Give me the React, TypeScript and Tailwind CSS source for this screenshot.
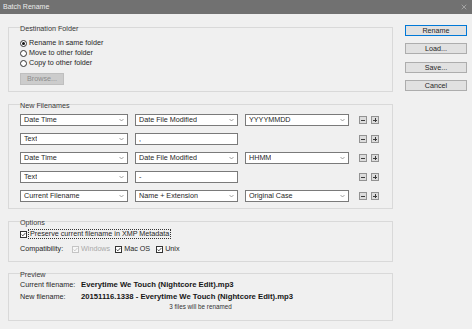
import { X } from 'lucide-react'

const font = { fontFamily: '"Liberation Sans", Arial, sans-serif' }

const rows = [
  { a: 'Date Time', b: 'Date File Modified', bSelect: true, c: 'YYYYMMDD' },
  { a: 'Text', b: ',', bSelect: false, c: null },
  { a: 'Date Time', b: 'Date File Modified', bSelect: true, c: 'HHMM' },
  { a: 'Text', b: '-', bSelect: false, c: null },
  { a: 'Current Filename', b: 'Name + Extension', bSelect: true, c: 'Original Case' },
]

function Chevron() {
  return (
    <svg width="5" height="4" viewBox="0 0 5 4" className="shrink-0">
      <polyline points="0.5,1 2.5,3 4.5,1" fill="none" stroke="#7a7a7a" strokeWidth="0.7" />
    </svg>
  )
}

function Select({ label, width }: { label: string; width: string }) {
  return (
    <div className={`${width} h-[12px] bg-white border border-[#7a7a7a] flex items-center justify-between pl-[3px] pr-[3px]`}>
      <span className="truncate">{label}</span>
      <Chevron />
    </div>
  )
}

function TextBox({ value, width }: { value: string; width: string }) {
  return (
    <div className={`${width} h-[12px] bg-white border border-[#7a7a7a] flex items-center pl-[3px]`}>
      <span>{value}</span>
    </div>
  )
}

function SmallBtn({ plus }: { plus?: boolean }) {
  return (
    <div className="w-[8px] h-[8px] bg-[#dcdcdc] border border-[#929292] flex items-center justify-center relative">
      <div className="w-[4px] h-[1px] bg-[#3a3a3a]" />
      {plus && <div className="absolute w-[1px] h-[4px] bg-[#3a3a3a]" />}
    </div>
  )
}

function Check({ disabled }: { disabled?: boolean }) {
  return (
    <div
      className={
        disabled
          ? 'w-[7px] h-[7px] bg-[#f7f7f7] border border-[#c4c4c4] flex items-center justify-center shrink-0'
          : 'w-[7px] h-[7px] bg-white border border-[#333] flex items-center justify-center shrink-0'
      }
    >
      <svg width="5" height="5" viewBox="0 0 5 5">
        <polyline points="0.6,2.6 1.9,3.8 4.4,1" fill="none" stroke={disabled ? '#bdbdbd' : '#222'} strokeWidth="0.8" />
      </svg>
    </div>
  )
}

function Radio({ checked, label }: { checked?: boolean; label: string }) {
  return (
    <div className="h-[10px] flex items-center gap-[2px]">
      <div className="w-[7px] h-[7px] rounded-full border border-[#333] bg-white flex items-center justify-center">
        {checked && <div className="w-[3px] h-[3px] rounded-full bg-[#111]" />}
      </div>
      <span>{label}</span>
    </div>
  )
}

function GroupLabel({ children }: { children: React.ReactNode }) {
  return <div className="-mt-[3px] ml-[11px] h-[8px] leading-[8px] text-[#3a3a3a]">{children}</div>
}

export default function App() {
  return (
    <div className="w-[474px] h-[331px] bg-white overflow-hidden text-[7.2px] leading-[8px] text-[#262626]" style={font}>
      <div className="w-[472px] h-[329px] bg-[#f0f0f0] flex flex-col">
        {/* Title bar */}
        <div className="h-[14px] bg-[#717171] text-[#ececec] text-[7px] flex items-center justify-between pl-[3px] pr-[4px]">
          <span>Batch Rename</span>
          <X className="w-[8px] h-[8px] text-[#e6e6e6]" strokeWidth={1.3} />
        </div>

        <div className="flex pl-[8px]">
          {/* Left column */}
          <div className="w-[385px] flex flex-col">
            {/* Destination Folder */}
            <div className="mt-[13px] h-[65px] border border-[#d9d9d9]">
              <GroupLabel>Destination Folder</GroupLabel>
              <div className="pl-[11px] mt-[5px] flex flex-col">
                <Radio checked label="Rename in same folder" />
                <Radio label="Move to other folder" />
                <Radio label="Copy to other folder" />
                <div className="mt-[5px] w-[44px] h-[12px] bg-[#cccccc] border border-[#bfbfbf] text-[#8c8c8c] flex items-center justify-center">
                  Browse...
                </div>
              </div>
            </div>

            {/* New Filenames */}
            <div className="mt-[12px] h-[105px] border border-[#d9d9d9]">
              <GroupLabel>New Filenames</GroupLabel>
              <div className="pl-[11px] mt-[4px] flex flex-col gap-[7px]">
                {rows.map((r, i) => (
                  <div key={i} className="flex items-center">
                    <Select label={r.a} width="w-[108px]" />
                    <div className="ml-[7px]">
                      {r.bSelect ? <Select label={r.b} width="w-[103px]" /> : <TextBox value={r.b} width="w-[103px]" />}
                    </div>
                    <div className="ml-[7px] w-[104px]">
                      {r.c && <Select label={r.c} width="w-[104px]" />}
                    </div>
                    <div className="ml-[10px] flex items-center gap-[4px]">
                      <SmallBtn />
                      <SmallBtn plus />
                    </div>
                  </div>
                ))}
              </div>
            </div>

            {/* Options */}
            <div className="mt-[12px] h-[41px] border border-[#d9d9d9]">
              <GroupLabel>Options</GroupLabel>
              <div className="pl-[11px] flex flex-col">
                <div className="mt-[2px] h-[10px] flex items-center gap-[1px]">
                  <Check />
                  <span className="border border-dotted border-[#333] px-[1px] leading-[8px]">
                    Preserve current filename in XMP Metadata
                  </span>
                </div>
                <div className="mt-[5px] h-[10px] flex items-center">
                  <span className="w-[52px] shrink-0">Compatibility:</span>
                  <div className="flex items-center gap-[2px] text-[#a9a9a9]">
                    <Check disabled />
                    <span>Windows</span>
                  </div>
                  <div className="ml-[5px] flex items-center gap-[2px]">
                    <Check />
                    <span>Mac OS</span>
                  </div>
                  <div className="ml-[6px] flex items-center gap-[2px]">
                    <Check />
                    <span>Unix</span>
                  </div>
                </div>
              </div>
            </div>

            {/* Preview */}
            <div className="mt-[11px] h-[48px] border border-[#d9d9d9]">
              <GroupLabel>Preview</GroupLabel>
              <div className="pl-[11px] flex flex-col">
                <div className="mt-[1px] h-[10px] flex items-center">
                  <span className="w-[61px] shrink-0">Current filename:</span>
                  <span className="font-bold text-[7.7px] text-[#161616]">Everytime We Touch (Nightcore Edit).mp3</span>
                </div>
                <div className="mt-[2px] h-[10px] flex items-center">
                  <span className="w-[61px] shrink-0">New filename:</span>
                  <span className="font-bold text-[7.7px] text-[#161616]">
                    20151116.1338 - Everytime We Touch (Nightcore Edit).mp3
                  </span>
                </div>
                <div className="h-[9px] flex items-center justify-center pr-[11px] text-[6.3px] text-[#333]">
                  3 files will be renamed
                </div>
              </div>
            </div>
          </div>

          {/* Right buttons */}
          <div className="ml-[12px] w-[62px] pt-[11px] flex flex-col">
            <div className="h-[11px] bg-[#e1e1e1] border border-[#0078d7] flex items-center justify-center">Rename</div>
            <div className="mt-[7px] h-[11px] bg-[#e1e1e1] border border-[#adadad] flex items-center justify-center">Load...</div>
            <div className="mt-[8px] h-[11px] bg-[#e1e1e1] border border-[#adadad] flex items-center justify-center">Save...</div>
            <div className="mt-[7px] h-[11px] bg-[#e1e1e1] border border-[#adadad] flex items-center justify-center">Cancel</div>
          </div>
        </div>
      </div>
    </div>
  )
}
